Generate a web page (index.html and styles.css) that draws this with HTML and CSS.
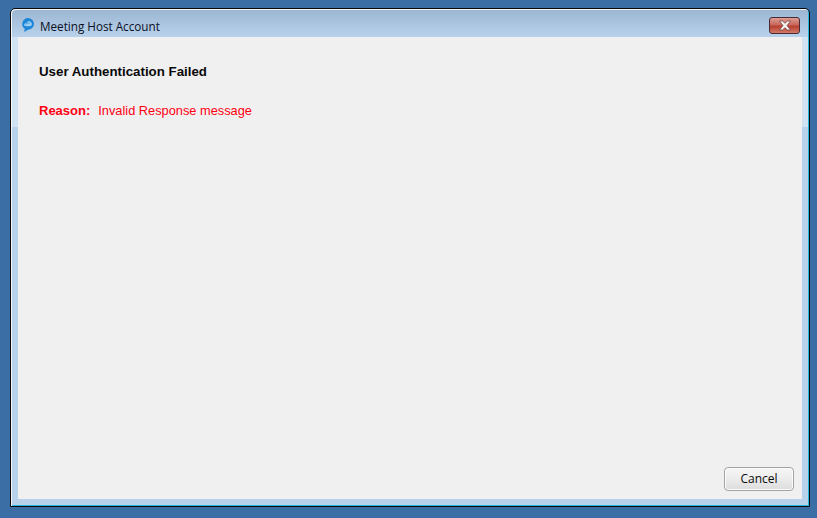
FILE: index.html
```html
<!DOCTYPE html>
<html lang="en">
<head>
  <meta charset="UTF-8">
  <title>Meeting Host Account</title>
  <link rel="stylesheet" href="styles.css">
</head>
<body>
  <div class="window">
    <div class="title-bar">
      <svg class="app-icon" width="14" height="16" viewBox="0 0 14 16">
        <path d="M7 1a6 6 0 0 1 6 6 6 6 0 0 1-6 5.800L3.200 15l.5-3.200A6 6 0 0 1 7 1z" fill="#1c86d8"/>
        <path d="M3 8.500c0-1.500 1-2.500 2.500-2.500C6 4.500 8 3.800 9.500 4.800c1.200.8 1.500 2 1.200 3.700-1.500 1-6 1-7.700 0z" fill="#9fd0f0"/>
        <path d="M5 7.500c.5-1.500 2-2 3.500-1.200" fill="none" stroke="#1c86d8" stroke-width="0.8"/>
      </svg>
      <span class="title-text">Meeting Host Account</span>
      <button type="button" class="close-btn" aria-label="Close">
        <svg width="14" height="11" viewBox="0 0 14 11">
          <path d="M1.500 1h3l2.500 2.300L9.500 1h3L9 5.500l3.500 4.500h-3L7 7.700 4.500 10h-3L5 5.500z" fill="#f4f4f4" stroke="#6e3a38" stroke-width="0.7"/>
        </svg>
      </button>
    </div>
    <div class="content">
      <div class="message">
        <h1 class="heading">User Authentication Failed</h1>
        <p class="reason"><b class="reason-label">Reason:</b>Invalid Response message</p>
      </div>
      <div class="button-row">
        <button type="button" class="cancel-btn">Cancel</button>
      </div>
    </div>
  </div>
</body>
</html>
```

FILE: styles.css
```css
html, body {
  height: 100%;
}

body {
  margin: 0;
  padding: 8px 0 0 10px;
  box-sizing: border-box;
  background-color: #3a6ea5;
  font-family: "Liberation Sans", Arial, sans-serif;
  overflow: hidden;
}

.window {
  width: 800px;
  height: 499px;
  box-sizing: border-box;
  display: flex;
  flex-direction: column;
  padding: 0 7px 7px 7px;
  border: 1px solid #0a0a0a;
  border-radius: 5px 5px 0 0;
  box-shadow: inset 1px 1px 0 #f4f8fb, inset -1px -1px 0 #27b6e0;
  background:
    linear-gradient(to bottom, rgba(255, 255, 255, 0.35), rgba(255, 255, 255, 0.35)) 0 28px / 100% 90px no-repeat,
    linear-gradient(to bottom, #9bb4d0 0, #b9d2ec 28px, #b9d2ec 100%);
}

.title-bar {
  height: 28px;
  box-sizing: border-box;
  flex: none;
  display: flex;
  align-items: center;
  padding: 5px 0 0 3px;
}

.app-icon {
  flex: none;
  margin-top: -1px;
}

.title-text {
  margin-left: 5px;
  font-family: "Open Sans", "Noto Sans", sans-serif;
  font-size: 11.700px;
  color: #0a0f1e;
}

.close-btn {
  width: 31px;
  height: 17px;
  margin-left: auto;
  margin-right: 2px;
  padding: 0;
  display: flex;
  align-items: center;
  justify-content: center;
  border: 1px solid #4a2a35;
  border-radius: 3px;
  background: linear-gradient(to bottom, #dc9d93 0, #c9675c 45%, #b73f30 55%, #d27a68 100%);
}

.content {
  flex: 1;
  display: flex;
  flex-direction: column;
  justify-content: space-between;
  background-color: #f0f0f0;
}

.message {
  padding: 27px 21px 0;
}

.heading {
  margin: 0;
  font-size: 13.300px;
  line-height: 15px;
  font-weight: bold;
  color: #0a0a0a;
}

.reason {
  margin: 24px 0 0;
  font-size: 12.800px;
  line-height: 15px;
  color: #ff0010;
}

.reason-label {
  margin-right: 8px;
  font-size: 13px;
}

.button-row {
  display: flex;
  justify-content: flex-end;
  padding: 0 8px 8px 0;
}

.cancel-btn {
  width: 70px;
  height: 24px;
  padding: 0 0 2px;
  border: 1px solid #a3a3a3;
  border-radius: 4px;
  background: linear-gradient(to bottom, #f6f6f6 0, #ececec 50%, #dcdcdc 100%);
  box-shadow: inset 0 0 0 1px #fbfbfb;
  font-family: "Open Sans", "Noto Sans", sans-serif;
  font-size: 12px;
  color: #0a0a0a;
}
```
